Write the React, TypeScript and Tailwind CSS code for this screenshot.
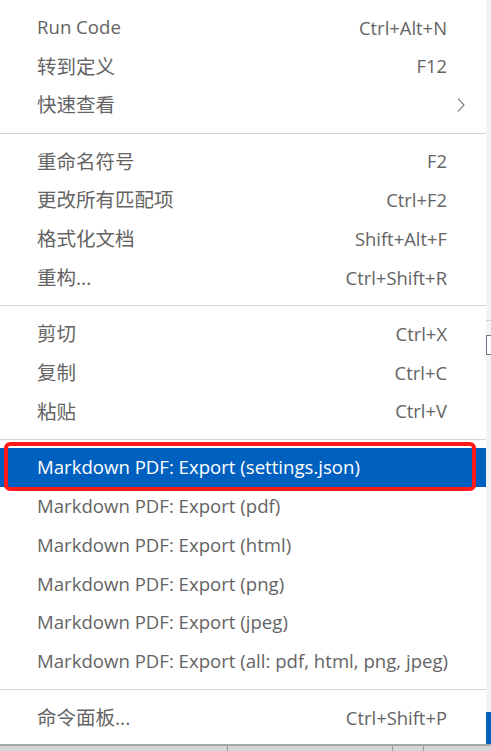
import React from "react"

type Item = { label: string; shortcut?: string; submenu?: boolean; active?: boolean }

const groups: Item[][] = [
  [
    { label: "Run Code", shortcut: "Ctrl+Alt+N" },
    { label: "转到定义", shortcut: "F12" },
    { label: "快速查看", submenu: true },
  ],
  [
    { label: "重命名符号", shortcut: "F2" },
    { label: "更改所有匹配项", shortcut: "Ctrl+F2" },
    { label: "格式化文档", shortcut: "Shift+Alt+F" },
    { label: "重构...", shortcut: "Ctrl+Shift+R" },
  ],
  [
    { label: "剪切", shortcut: "Ctrl+X" },
    { label: "复制", shortcut: "Ctrl+C" },
    { label: "粘贴", shortcut: "Ctrl+V" },
  ],
  [
    { label: "Markdown PDF: Export (settings.json)", active: true },
    { label: "Markdown PDF: Export (pdf)" },
    { label: "Markdown PDF: Export (html)" },
    { label: "Markdown PDF: Export (png)" },
    { label: "Markdown PDF: Export (jpeg)" },
    { label: "Markdown PDF: Export (all: pdf, html, png, jpeg)" },
  ],
  [{ label: "命令面板...", shortcut: "Ctrl+Shift+P" }],
]

const isCjk = (s: string) => /[\u4e00-\u9fff]/.test(s)

function Row({ item }: { item: Item }) {
  return (
    <div
      className={`relative flex items-center h-[38.75px] pl-[37px] pr-[39px] ${
        item.active ? "bg-[#0060c0] text-white" : "text-[#646464]"
      }`}
    >
      <span className={`flex-1 whitespace-nowrap ${isCjk(item.label) ? "text-[19.5px]" : "text-[18.6px]"}`}>
        {item.label}
      </span>
      {item.shortcut && <span className="whitespace-nowrap text-[18.4px]">{item.shortcut}</span>}
      {item.submenu && (
        <svg className="absolute right-[21px] top-1/2 -translate-y-1/2" width="8" height="15" viewBox="0 0 8 15">
          <path d="M1 1 L7 7.5 L1 14" fill="none" stroke="#646464" strokeWidth="1.1" />
        </svg>
      )}
      {item.active && (
        <div className="absolute left-[4px] right-[10px] top-[-6px] bottom-[-4px] border-[4px] border-[#ff1a1a] rounded-[6px]" />
      )}
    </div>
  )
}

export default function App() {
  return (
    <div
      className="w-[491px] h-[751px] overflow-hidden bg-[#d6d6d6] flex flex-col"
      style={{ fontFamily: '"Open Sans", "Noto Sans CJK SC", sans-serif' }}
    >
      <div className="flex h-[744px] shrink-0">
        <div className="w-[486px] shrink-0 bg-white pt-[8px] pb-[7px] flex flex-col">
          {groups.map((group, gi) => (
            <div key={gi}>
              {gi > 0 && (
                <div className="h-[17.5px] flex items-center">
                  <div className="w-full h-px bg-[#d4d4d4]" />
                </div>
              )}
              {group.map((item) => (
                <Row key={item.label} item={item} />
              ))}
            </div>
          ))}
        </div>
        {/* editor edge showing past the menu */}
        <div className="flex-1 min-w-0 bg-[#f3f3f3] flex flex-col">
          <div className="h-[320px]" />
          <div className="h-px bg-[#d0d0d0]" />
          <div className="h-[14px]" />
          <div className="h-[20px] border border-[#7a6a8a] border-r-0 bg-white" />
          <div className="flex-1" />
          <div className="h-[32px] bg-[#0060c0]" />
        </div>
      </div>
      <div className="h-[2px] shrink-0 bg-[#a8a8a8]" />
      <div className="flex-1 bg-[#d6d6d6] flex">
        <div className="w-[228px] border-r border-[#9a9a9a]" />
        <div className="w-[165px] border-r border-[#9a9a9a]" />
        <div className="w-[31px] border-r border-[#9a9a9a]" />
      </div>
    </div>
  )
}
